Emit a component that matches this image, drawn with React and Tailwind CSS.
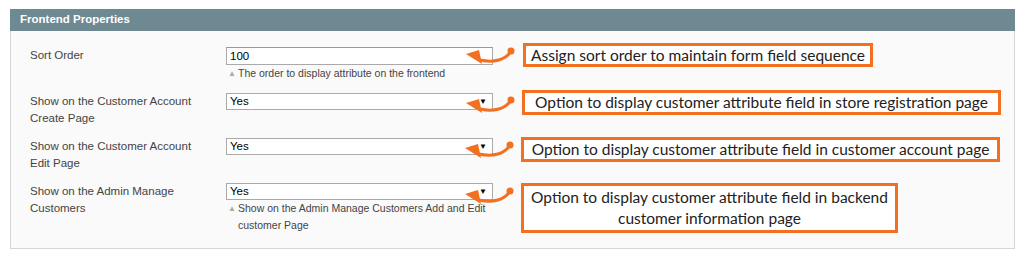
import React from 'react';

const rows = [
  { label: ['Sort Order'], type: 'input', value: '100', hint: ['The order to display attribute on the frontend'] },
  { label: ['Show on the Customer Account', 'Create Page'], type: 'select', value: 'Yes' },
  { label: ['Show on the Customer Account', 'Edit Page'], type: 'select', value: 'Yes' },
  {
    label: ['Show on the Admin Manage', 'Customers'],
    type: 'select',
    value: 'Yes',
    hint: ['Show on the Admin Manage Customers Add and Edit', 'customer Page'],
  },
];

const callouts = [
  { top: 'top-[43px]', left: 'left-[523px]', w: 'w-[350px]', h: 'h-[24px]', lines: ['Assign sort order to maintain form field sequence'] },
  { top: 'top-[90px]', left: 'left-[522px]', w: 'w-[479px]', h: 'h-[25px]', lines: ['Option to display customer attribute field in store registration page'] },
  { top: 'top-[137px]', left: 'left-[521px]', w: 'w-[479px]', h: 'h-[25px]', lines: ['Option to display customer attribute field in customer account page'] },
  { top: 'top-[183px]', left: 'left-[521px]', w: 'w-[377px]', h: 'h-[50px]', lines: ['Option to display customer attribute field in backend', 'customer information page'] },
];

// dot positions of the orange pointer arrows
const arrows = [
  [511, 51],
  [511, 100],
  [510, 145],
  [510, 191],
];

const FieldRow = ({ row }) => (
  <div className="flex">
    <div className="w-[196px] text-[11.5px] leading-[17px] text-[#444]">
      {row.label.map((l) => (
        <div key={l}>{l}</div>
      ))}
    </div>
    <div className="w-[267px]">
      {row.type === 'input' ? (
        <div className="h-[18px] border border-[#aaa] border-t-[#999] bg-white pl-[3px] text-[11.5px] leading-[16px] text-black">
          {row.value}
        </div>
      ) : (
        <div className="flex h-[17px] items-center justify-between border border-[#aaa] bg-white pl-[3px] pr-[5px] text-[11.5px] leading-[15px] text-black">
          <span>{row.value}</span>
          <span className="text-[8px] leading-none">▼</span>
        </div>
      )}
      {row.hint && (
        <div className="flex whitespace-nowrap text-[10.5px] leading-[17px] text-[#444]">
          <span className="w-[12px] shrink-0 pl-[2px] text-[8px] text-[#aaa]">▲</span>
          <div>
            {row.hint.map((h) => (
              <div key={h}>{h}</div>
            ))}
          </div>
        </div>
      )}
    </div>
  </div>
);

export default function App() {
  return (
    <div className="relative h-[258px] w-[1024px] bg-white pl-[10px] pt-[9px] font-['Liberation_Sans',Arial,sans-serif]">
      <div className="w-[1005px]">
        <div className="flex h-[22px] items-center bg-[#6f8992] pl-[10px] text-[11.5px] font-bold text-white">
          Frontend Properties
        </div>
        <div className="flex flex-col gap-[11px] border border-t-0 border-[#d6d6d6] bg-[#fafafa] pb-[14px] pl-[19px] pt-[16px]">
          {rows.map((r) => (
            <FieldRow key={r.label.join(' ')} row={r} />
          ))}
        </div>
      </div>

      {callouts.map((c) => (
        <div
          key={c.lines[0]}
          className={`absolute ${c.top} ${c.left} ${c.w} ${c.h} flex flex-col items-center justify-center border-[3px] border-[#f37021] bg-white font-['Lato',sans-serif] text-[15.5px] leading-[21px] text-[#222]`}
        >
          {c.lines.map((l) => (
            <div key={l} className="whitespace-nowrap">{l}</div>
          ))}
        </div>
      ))}

      <svg className="pointer-events-none absolute left-0 top-0" width="1024" height="258">
        {arrows.map(([x, y]) => (
          <g key={y} transform={`translate(${x} ${y})`} fill="#f37021" stroke="#f37021">
            <circle cx="0" cy="0" r="3.5" stroke="none" />
            <path d="M0 0 C -5 9, -17 12, -31 9" fill="none" strokeWidth="3" strokeLinecap="round" />
            <polygon points="-45,3 -32,-1 -29,13" stroke="none" />
          </g>
        ))}
      </svg>
    </div>
  );
}
